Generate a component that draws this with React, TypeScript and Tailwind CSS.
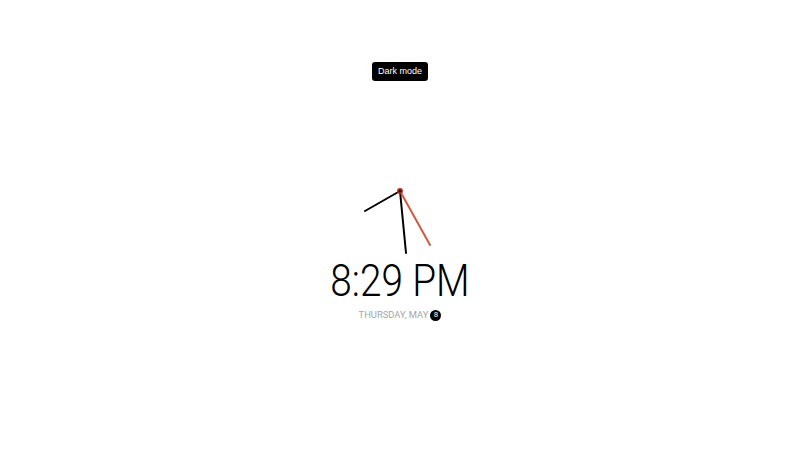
import React from 'react'

function Clock() {
  return (
    <svg width="140" height="138" viewBox="0 0 140 138" className="block">
      <line x1="70" y1="70" x2="35" y2="90" stroke="#000" strokeWidth="2" strokeLinecap="round" />
      <line x1="70" y1="70" x2="76" y2="132" stroke="#000" strokeWidth="2" strokeLinecap="round" />
      <line x1="70" y1="70" x2="100" y2="124" stroke="#d9583c" strokeWidth="2" strokeLinecap="round" />
      <circle cx="70" cy="70" r="3" fill="#b8332a" />
      <circle cx="70" cy="70" r="1.5" fill="#3a0d0a" />
    </svg>
  )
}

export default function App() {
  return (
    <main className="w-full h-[450px] bg-white flex flex-col items-center font-['Roboto',sans-serif]">
      <button className="mt-[62px] h-[19px] w-[56px] bg-black text-white text-[9px] leading-none rounded-[3px] font-['Liberation_Sans',sans-serif]">
        Dark mode
      </button>
      <div className="mt-[40px]">
        <Clock />
      </div>
      <div className="text-[45px] leading-[44px] font-light text-black scale-x-[0.86]">8:29 PM</div>
      <div className="mt-[6px] flex items-center gap-[2px] text-[9.4px] leading-[12px] text-[#a6a6a6] uppercase">
        <span>Thursday, May</span>
        <span className="w-[11px] h-[11px] rounded-full bg-black text-white text-[8px] leading-none flex items-center justify-center">8</span>
      </div>
    </main>
  )
}
